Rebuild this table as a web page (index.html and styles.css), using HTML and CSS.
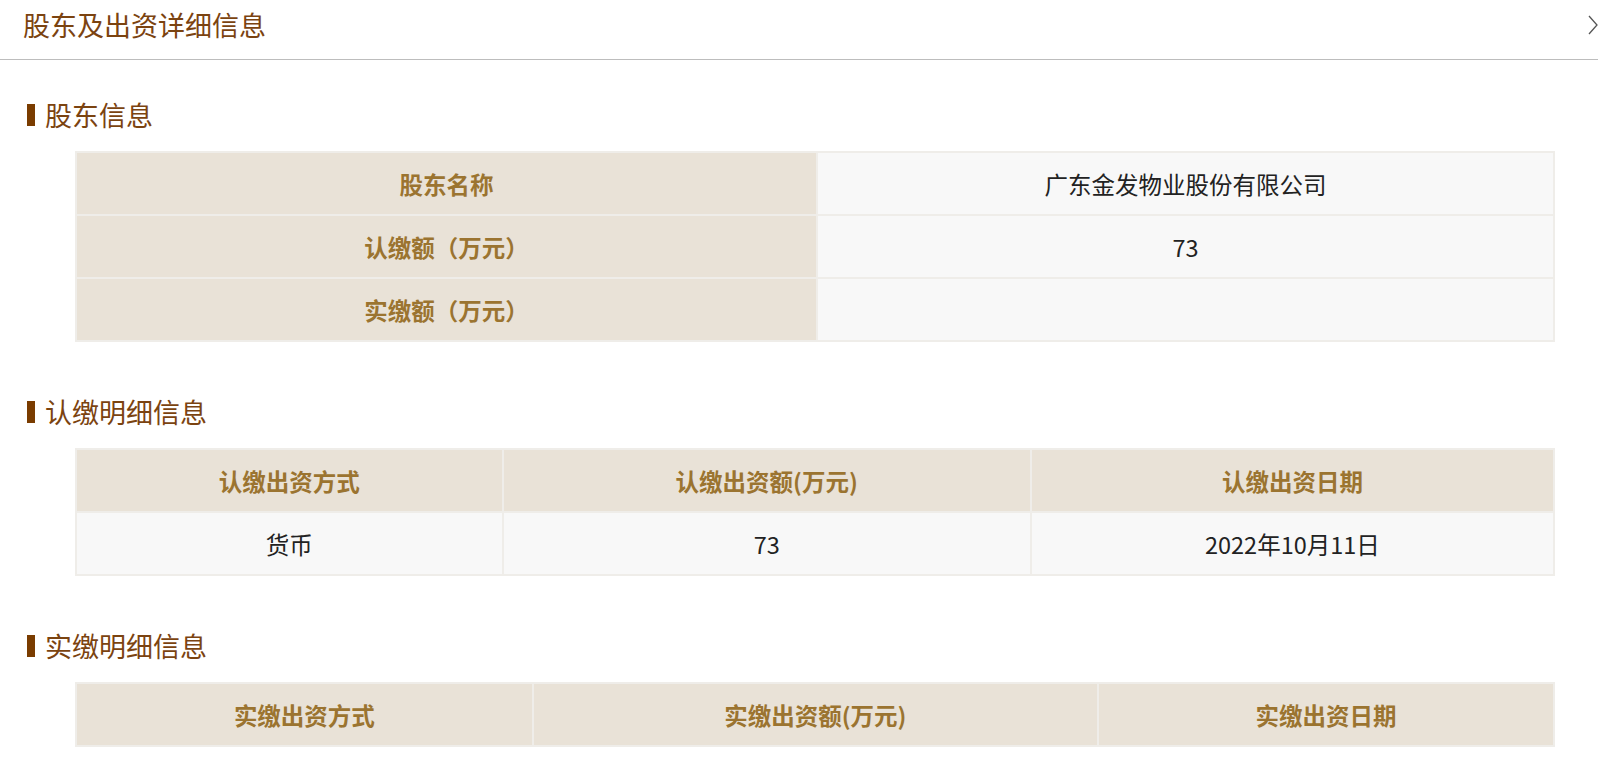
FILE: index.html
```html
<!DOCTYPE html>
<html lang="zh-CN">

<head>
    <meta charset="UTF-8">
    <meta name="viewport" content="width=device-width, initial-scale=1.0">
    <title>股东及出资详细信息</title>
    <link rel="stylesheet" href="styles.css">
</head>

<body>
    <div class="top-bar">
        <span class="top-title">股东及出资详细信息</span>
        <svg class="top-arrow" width="10" height="20" viewBox="0 0 10 20">
            <path d="M1 1 L9 10 L1 19" fill="none" stroke="#555" stroke-width="1.3"/>
        </svg>
    </div>

    <div class="content">
        <h2 class="section-title first">股东信息</h2>
        <table class="info-table">
            <tr>
                <th class="half">股东名称</th>
                <td>广东金发物业股份有限公司</td>
            </tr>
            <tr>
                <th>认缴额（万元）</th>
                <td>73</td>
            </tr>
            <tr>
                <th>实缴额（万元）</th>
                <td></td>
            </tr>
        </table>

        <h2 class="section-title">认缴明细信息</h2>
        <table class="info-table">
            <tr>
                <th class="col-a">认缴出资方式</th>
                <th class="col-b">认缴出资额(万元)</th>
                <th>认缴出资日期</th>
            </tr>
            <tr>
                <td>货币</td>
                <td>73</td>
                <td>2022年10月11日</td>
            </tr>
        </table>

        <h2 class="section-title">实缴明细信息</h2>
        <table class="info-table">
            <tr>
                <th class="col-c">实缴出资方式</th>
                <th class="col-d">实缴出资额(万元)</th>
                <th>实缴出资日期</th>
            </tr>
        </table>
    </div>
</body>

</html>
```

FILE: styles.css
```css
body {
    margin: 0;
    background-color: #fff;
    font-family: "Noto Sans CJK SC", "Noto Sans", sans-serif;
    color: #222;
}

.top-bar {
    display: flex;
    justify-content: space-between;
    align-items: center;
    height: 49px;
    padding: 0 0 10px 23px;
    border-bottom: 1px solid #bdbdbd;
}

.top-title {
    font-size: 27px;
    line-height: 49px;
    color: #7b4310;
}

.top-arrow {
    display: block;
}

.content {
    padding: 0 43px 40px 27px;
}

.section-title {
    display: flex;
    align-items: center;
    margin: 52px 0 18px;
    font-size: 27px;
    font-weight: normal;
    line-height: 36px;
    color: #7b4310;
}

.section-title.first {
    margin-top: 37px;
}

/* the little brown bar in front of each section title */
.section-title::before {
    content: "";
    display: block;
    width: 8px;
    height: 22px;
    margin-right: 10px;
    background-color: #7a3c00;
}

.info-table {
    width: calc(100% - 48px);
    margin-left: 48px;
    border-collapse: collapse;
    table-layout: fixed;
    border: 2px solid #ececec;
}

.info-table th,
.info-table td {
    height: 61px;
    padding: 0;
    border: 2px solid #efede9;
    text-align: center;
    font-size: 23.5px;
}

.info-table th {
    background-color: #e9e2d7;
    color: #9b7430;
    font-weight: bold;
}

.info-table td {
    background-color: #f8f8f8;
    color: #222;
    font-weight: normal;
}

.half {
    width: 50%;
}

.col-a {
    width: 28.73%;
}

.col-b {
    width: 35.6%;
}

.col-c {
    width: 30.77%;
}

.col-d {
    width: 38.1%;
}
```
